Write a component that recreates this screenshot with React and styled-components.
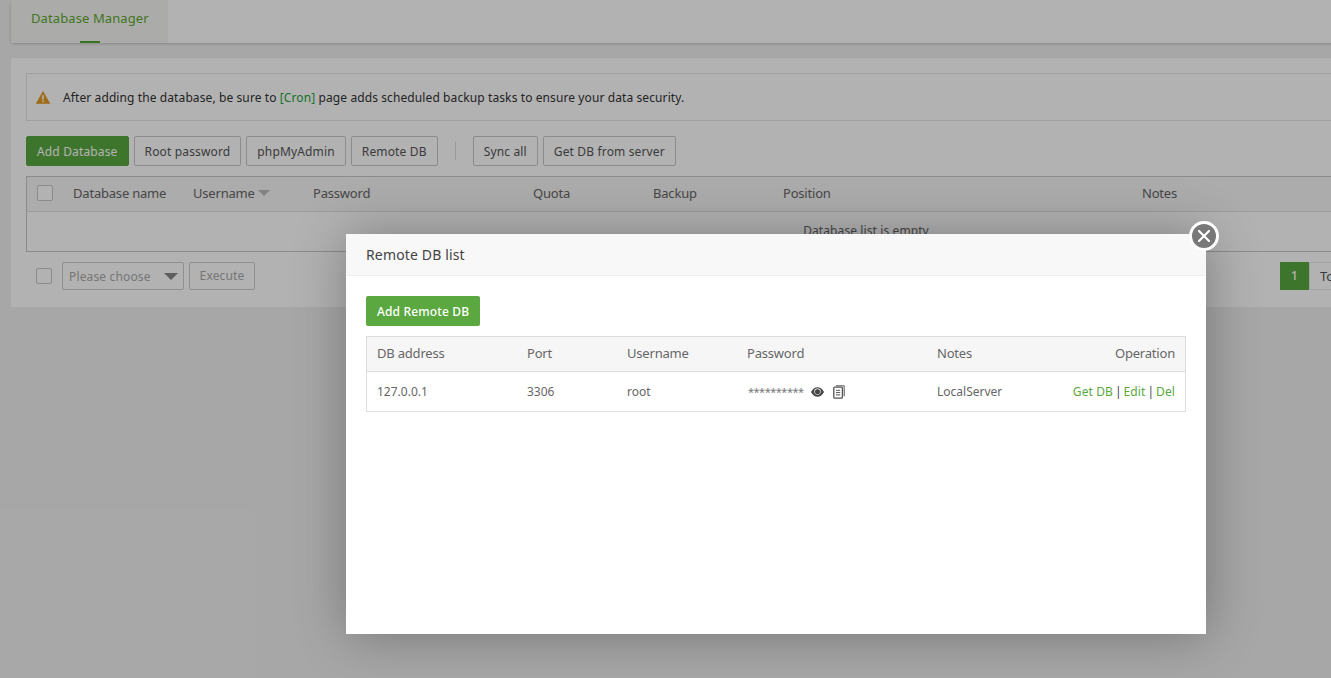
import React from "react";
import styled, { createGlobalStyle } from "styled-components";

const Global = createGlobalStyle`
  html, body { margin: 0; padding: 0; height: 100%; overflow: hidden; background: #f0f0f0; }
  body { font-family: "Noto Sans", "Open Sans", Arial, sans-serif; font-size: 12px; color: #666; }
  * { box-sizing: border-box; }
`;

const Page = styled.div`
  width: 1331px; height: 678px; overflow: hidden; position: relative; padding: 0 0 0 11px;
`;
const TabBar = styled.div`
  width: 1740px; height: 43px; background: #fff; border-radius: 0 0 3px 3px;
  box-shadow: 0 1px 3px rgba(0,0,0,.2); display: flex;
`;
const Tab = styled.div`
  position: relative; width: 157px; height: 43px; padding: 9px 0 0 20px; background: #f5f7f4;
  color: #5da82e; font-size: 13px; line-height: 18px; letter-spacing: .1px;
  &::after { content: ""; position: absolute; left: 69px; bottom: 0; width: 20px; height: 2px; background: #55a630; }
`;
const Card = styled.div`
  width: 1740px; height: 249px; margin-top: 15px; background: #fff; padding: 15px;
`;
const Alert = styled.div`
  height: 48px; width: 1680px; border: 1px solid #e4e4e4; display: flex; align-items: center; padding-left: 9px;
  background: #fff; color: #333; gap: 13px; font-size: 12px; letter-spacing: .1px;
`;
const CronLink = styled.span` color: #20a53a; `;
const Toolbar = styled.div` display: flex; align-items: center; gap: 5px; margin-top: 15px; `;
const Btn = styled.div`
  height: 30px; line-height: 29px; padding: 0 10px; border-radius: 2px; font-size: 12px; white-space: nowrap;
  letter-spacing: .15px;
  border: 1px solid ${p => (p.$primary ? "#5aa83f" : "#c8c8c8")};
  background: ${p => (p.$primary ? "#5aa83f" : "#fff")};
  color: ${p => (p.$primary ? "#fff" : "#555")};
`;
const Divider = styled.div` width: 1px; height: 18px; background: #ddd; margin: 0 12px; `;
const MainTable = styled.div` width: 1680px; margin-top: 10px; border: 1px solid #c8c8c8; `;
const MainHead = styled.div`
  display: grid; grid-template-columns: 46px 120px 120px 220px 120px 130px 359px 1fr; align-items: center;
  height: 35px; padding-bottom: 2px; background: #f6f6f6; border-bottom: 1px solid #ddd; font-size: 13px;
  letter-spacing: -.2px; color: #666;
`;
const HeadCell = styled.div` display: flex; align-items: center; gap: 3px; `;
const Check = styled.div`
  width: 16px; height: 16px; border: 1px solid #c8c8c8; border-radius: 2px; background: #fff;
  margin-left: ${p => p.$ml || 0}px;
`;
const Caret = styled.span`
  width: 0; height: 0; border-left: ${p => p.$s || 6}px solid transparent; border-right: ${p => p.$s || 6}px solid transparent;
  border-top: ${p => p.$s || 6}px solid ${p => p.$c || "#bbb"};
`;
const Empty = styled.div` height: 39px; text-align: center; line-height: 37px; color: #666; letter-spacing: .1px; `;
const BottomBar = styled.div`
  display: flex; align-items: center; margin-top: 10px; padding-left: 10px; gap: 5px; height: 28px;
`;
const Select = styled.div`
  width: 122px; height: 28px; margin-left: 5px; border: 1px solid #ccc; border-radius: 2px; color: #aaa;
  display: flex; align-items: center; justify-content: space-between; padding: 0 5px 0 6px; letter-spacing: .15px;
`;
const Exec = styled.div`
  width: 66px; height: 28px; border: 1px solid #ccc; border-radius: 2px; color: #aaa; text-align: center;
  line-height: 26px; letter-spacing: .15px;
`;
const Pager = styled.div` display: flex; height: 28px; margin-left: 1020px; `;
const PageNo = styled.div`
  width: 29px; height: 28px; background: #5aa83f; color: #fff; text-align: center; line-height: 28px; font-weight: 500;
`;
const PageInfo = styled.div`
  padding: 0 10px; line-height: 26px; border: 1px solid #e8e8e8; font-size: 13px; color: #555; white-space: nowrap;
`;

const Shade = styled.div` position: absolute; inset: 0; background: rgba(0,0,0,.3); `;
const Modal = styled.div`
  position: absolute; left: 346px; top: 234px; width: 860px; height: 400px; background: #fff;
  box-shadow: 1px 1px 50px rgba(0,0,0,.3);
`;
const ModalTitle = styled.div`
  height: 42px; background: #f8f8f8; border-bottom: 1px solid #eee; padding-left: 20px; line-height: 41px;
  font-size: 14px; color: #444; letter-spacing: .15px;
`;
const Close = styled.div`
  position: absolute; right: -13px; top: -13px; width: 30px; height: 30px; border-radius: 50%;
  background: #787878; border: 3px solid #fff; display: flex; align-items: center; justify-content: center;
`;
const ModalBody = styled.div` padding: 20px; `;
const AddBtn = styled.div`
  display: inline-block; height: 30px; line-height: 31px; padding: 0 11px; background: #5aa83f; color: #fff;
  border-radius: 2px; font-size: 12px; font-weight: 500; letter-spacing: .15px;
`;
const RemoteTable = styled.div` margin-top: 10px; border: 1px solid #ddd; `;
const Row = styled.div`
  display: grid; grid-template-columns: 150px 100px 120px 190px 1fr auto; align-items: center; padding: 0 10px;
  height: ${p => (p.$head ? "35px" : "39px")};
  padding-bottom: ${p => (p.$head ? "2px" : "0")};
  background: ${p => (p.$head ? "#f6f6f6" : "#fff")};
  border-bottom: ${p => (p.$head ? "1px solid #ddd" : "none")};
  font-size: ${p => (p.$head ? "13px" : "12px")};
  letter-spacing: ${p => (p.$head ? "-.2px" : "0")};
  color: #666;
`;
const PassCell = styled.div` display: flex; align-items: center; color: #777; `;
const Stars = styled.span` font-size: 11px; margin-left: 1px; letter-spacing: -.5px; `;
const IconWrap = styled.span` display: inline-flex; margin-left: ${p => p.$ml}px; `;
const Ops = styled.div` color: #444; display: flex; `;
const OpLink = styled.span` color: #5aa83f; letter-spacing: .1px; `;
const Sep = styled.span` margin: 0 2px; `;

const Warn = () => (
  <svg width="14" height="13" viewBox="0 0 14 13">
    <path d="M7 .5 13.8 12.5H.2Z" fill="#e39a25" stroke="#e39a25" strokeWidth=".6" strokeLinejoin="round" />
    <rect x="6.2" y="4.2" width="1.6" height="4.6" fill="#fff" />
    <rect x="6.2" y="9.6" width="1.6" height="1.6" fill="#fff" />
  </svg>
);
const Eye = () => (
  <svg width="13" height="10" viewBox="0 0 13 10">
    <path d="M0 5C2 1.6 4 .2 6.5.2S11 1.6 13 5C11 8.4 9 9.8 6.5 9.8S2 8.4 0 5Z" fill="#444" />
    <circle cx="6.5" cy="4.6" r="3.3" fill="#ddd" />
    <circle cx="6.5" cy="4.8" r="2.5" fill="#444" />
  </svg>
);
const Copy = () => (
  <svg width="12" height="14" viewBox="0 0 12 14" fill="none" stroke="#555">
    <path d="M3 .8h8.2v10.4" strokeWidth="1" />
    <rect x=".8" y="2.2" width="8.6" height="11" rx="1" strokeWidth="1.3" />
    <path d="M3 5.3h4.2M3 7.6h4.2M3 9.9h4.2" strokeWidth="1" />
  </svg>
);
const X = () => (
  <svg width="14" height="14" viewBox="0 0 14 14" stroke="#fff" strokeWidth="2.2" strokeLinecap="round">
    <path d="M2 2 12 12M12 2 2 12" />
  </svg>
);

export default function App() {
  return (
    <>
      <Global />
      <Page>
        <TabBar><Tab>Database Manager</Tab></TabBar>
        <Card>
          <Alert>
            <Warn />
            <span>After adding the database, be sure to <CronLink>[Cron]</CronLink> page adds scheduled backup tasks to ensure your data security.</span>
          </Alert>
          <Toolbar>
            <Btn $primary>Add Database</Btn>
            <Btn>Root password</Btn>
            <Btn>phpMyAdmin</Btn>
            <Btn>Remote DB</Btn>
            <Divider />
            <Btn>Sync all</Btn>
            <Btn>Get DB from server</Btn>
          </Toolbar>
          <MainTable>
            <MainHead>
              <Check $ml={10} />
              <HeadCell>Database name</HeadCell>
              <HeadCell>Username <Caret /></HeadCell>
              <HeadCell>Password</HeadCell>
              <HeadCell>Quota</HeadCell>
              <HeadCell>Backup</HeadCell>
              <HeadCell>Position</HeadCell>
              <HeadCell>Notes</HeadCell>
            </MainHead>
            <Empty>Database list is empty</Empty>
          </MainTable>
          <BottomBar>
            <Check />
            <Select>Please choose <Caret $c="#888" $s={7} /></Select>
            <Exec>Execute</Exec>
            <Pager><PageNo>1</PageNo><PageInfo>Total 0</PageInfo></Pager>
          </BottomBar>
        </Card>
        <Shade />
        <Modal>
          <ModalTitle>Remote DB list</ModalTitle>
          <Close><X /></Close>
          <ModalBody>
            <AddBtn>Add Remote DB</AddBtn>
            <RemoteTable>
              <Row $head>
                <div>DB address</div><div>Port</div><div>Username</div><div>Password</div><div>Notes</div><div>Operation</div>
              </Row>
              <Row>
                <div>127.0.0.1</div><div>3306</div><div>root</div>
                <PassCell><Stars>**********</Stars><IconWrap $ml={7}><Eye /></IconWrap><IconWrap $ml={9}><Copy /></IconWrap></PassCell>
                <div>LocalServer</div>
                <Ops><OpLink>Get DB</OpLink><Sep>|</Sep><OpLink>Edit</OpLink><Sep>|</Sep><OpLink>Del</OpLink></Ops>
              </Row>
            </RemoteTable>
          </ModalBody>
        </Modal>
      </Page>
    </>
  );
}
